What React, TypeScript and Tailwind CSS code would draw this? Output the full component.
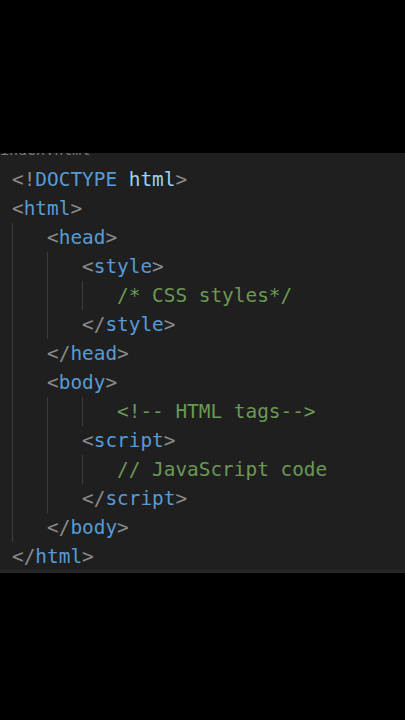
type Tok = { t: string; c: string };

const gray = "text-[#8a8a8a]";
const tag = "text-[#579bd6]";
const attr = "text-[#9cd3f2]";
const green = "text-[#6a9955]";

const lt = (s: string): Tok => ({ t: s, c: gray });
const tg = (s: string): Tok => ({ t: s, c: tag });

const lines: { indent: number; toks: Tok[] }[] = [
  { indent: 0, toks: [lt("<!"), tg("DOCTYPE"), { t: " html", c: attr }, lt(">")] },
  { indent: 0, toks: [lt("<"), tg("html"), lt(">")] },
  { indent: 1, toks: [lt("<"), tg("head"), lt(">")] },
  { indent: 2, toks: [lt("<"), tg("style"), lt(">")] },
  { indent: 3, toks: [{ t: "/* CSS styles*/", c: green }] },
  { indent: 2, toks: [lt("</"), tg("style"), lt(">")] },
  { indent: 1, toks: [lt("</"), tg("head"), lt(">")] },
  { indent: 1, toks: [lt("<"), tg("body"), lt(">")] },
  { indent: 3, toks: [{ t: "<!-- HTML tags-->", c: green }] },
  { indent: 2, toks: [lt("<"), tg("script"), lt(">")] },
  { indent: 3, toks: [{ t: "// JavaScript code", c: green }] },
  { indent: 2, toks: [lt("</"), tg("script"), lt(">")] },
  { indent: 1, toks: [lt("</"), tg("body"), lt(">")] },
  { indent: 0, toks: [lt("</"), tg("html"), lt(">")] },
];

const CodeLine = ({ indent, toks }: { indent: number; toks: Tok[] }) => (
  <div className="flex h-[29px] items-center whitespace-pre">
    {Array.from({ length: indent }).map((_, i) => (
      <span
        key={i}
        className="h-full w-[3ch] border-l border-[#3c3c3c]"
      />
    ))}
    {toks.map((tk, i) => (
      <span key={i} className={tk.c}>
        {tk.t}
      </span>
    ))}
  </div>
);

export default function App() {
  return (
    <div className="flex h-[720px] w-[405px] flex-col bg-black">
      <div className="h-[153px] shrink-0" />
      <div
        className="h-[420px] shrink-0 overflow-hidden border-b-[3px] border-[#262626] bg-[#1f1f1f] pl-[12px]"
        style={{ fontFamily: '"DejaVu Sans Mono", monospace' }}
      >
        <div className="-ml-[12px] h-[12px] overflow-hidden">
          <div className="-mt-[13px] text-[15px] leading-[20px] text-[#7a7a7a]">
            index.html
          </div>
        </div>
        <div className="text-[19.4px]">
          {lines.map((l, i) => (
            <CodeLine key={i} indent={l.indent} toks={l.toks} />
          ))}
        </div>
      </div>
      <div className="flex-1" />
    </div>
  );
}
